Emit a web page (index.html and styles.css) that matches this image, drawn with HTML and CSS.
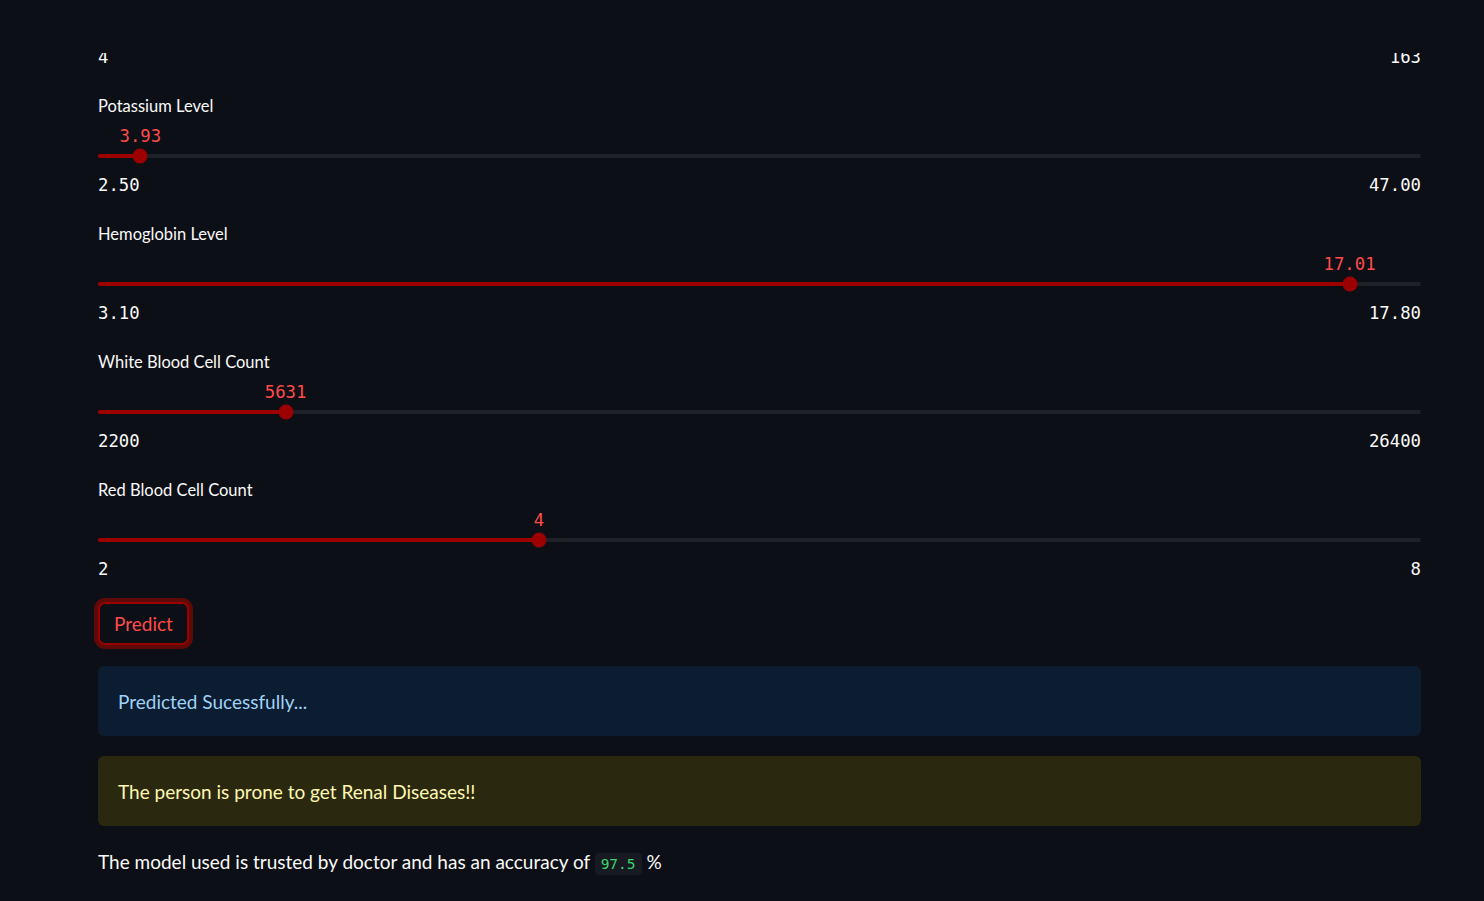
FILE: index.html
```html
<!DOCTYPE html>
<html lang="en">
<head>
  <meta charset="UTF-8" />
  <meta name="viewport" content="width=device-width, initial-scale=1.0" />
  <title>Renal Disease Prediction</title>
  <link rel="stylesheet" href="styles.css">
</head>
<body>
  <div class="topbar"></div>
  <div class="main">
    <div class="ticks first">
      <span>4</span>
      <span>163</span>
    </div>

    <div class="slider">
      <div class="label">Potassium Level</div>
      <div class="thumb-row" style="--p: 3.2%">
        <div class="value">3.93</div>
        <div class="track"><div class="fill"></div><div class="thumb"></div></div>
      </div>
      <div class="ticks"><span>2.50</span><span>47.00</span></div>
    </div>

    <div class="slider">
      <div class="label">Hemoglobin Level</div>
      <div class="thumb-row" style="--p: 94.6%">
        <div class="value">17.01</div>
        <div class="track"><div class="fill"></div><div class="thumb"></div></div>
      </div>
      <div class="ticks"><span>3.10</span><span>17.80</span></div>
    </div>

    <div class="slider">
      <div class="label">White Blood Cell Count</div>
      <div class="thumb-row" style="--p: 14.18%">
        <div class="value">5631</div>
        <div class="track"><div class="fill"></div><div class="thumb"></div></div>
      </div>
      <div class="ticks"><span>2200</span><span>26400</span></div>
    </div>

    <div class="slider">
      <div class="label">Red Blood Cell Count</div>
      <div class="thumb-row" style="--p: 33.33%">
        <div class="value">4</div>
        <div class="track"><div class="fill"></div><div class="thumb"></div></div>
      </div>
      <div class="ticks"><span>2</span><span>8</span></div>
    </div>

    <button class="predict-btn">Predict</button>

    <div class="alert info">Predicted Sucessfully...</div>
    <div class="alert warning">The person is prone to get Renal Diseases!!</div>

    <p class="note">The model used is trusted by doctor and has an accuracy of <code>97.5</code> %</p>
  </div>
</body>
</html>
```

FILE: styles.css
```css
body {
  margin: 0;
  background: #0c0f15;
  color: #fafafa;
  font-family: Lato, sans-serif;
  overflow: hidden;
}

.topbar {
  position: fixed;
  top: 0;
  left: 0;
  right: 0;
  height: 53px;
  background: #0c0f15;
  z-index: 2;
}

.main {
  width: 1323px;
  margin-left: 98px;
  padding-top: 45px;
  display: flex;
  flex-direction: column;
  align-items: flex-start;
}

.slider {
  width: 100%;
  height: 128px;
}

.label {
  height: 24px;
  line-height: 24px;
  font-size: 16.5px;
}

.thumb-row {
  position: relative;
  height: 40px;
  padding-top: 36px;
  box-sizing: border-box;
}

.value {
  position: absolute;
  top: 6px;
  left: var(--p);
  transform: translateX(-50%);
  height: 24px;
  line-height: 24px;
  font-family: "DejaVu Sans Mono", monospace;
  font-size: 17.3px;
  color: #ff4b4b;
  white-space: nowrap;
}

.track {
  position: relative;
  height: 4px;
  border-radius: 2px;
  background: #1f2128;
}

.fill {
  width: var(--p);
  height: 100%;
  border-radius: 2px;
  background: #9c0000;
}

.thumb {
  position: absolute;
  top: 50%;
  left: var(--p);
  width: 15px;
  height: 15px;
  border-radius: 50%;
  background: #9c0000;
  transform: translate(-50%, -50%);
}

.ticks {
  width: 100%;
  margin-top: 15px;
  height: 24px;
  line-height: 24px;
  display: flex;
  justify-content: space-between;
  font-family: "DejaVu Sans Mono", monospace;
  font-size: 17.3px;
}

.ticks.first {
  margin-top: 0;
  margin-bottom: 25px;
}

.predict-btn {
  margin-top: -4px;
  width: 91px;
  height: 43px;
  background: #0c0f15;
  color: #ff4b4b;
  border: 2px solid #990000;
  border-radius: 7px;
  box-shadow: 0 0 0 4px #600909;
  font-family: Lato, sans-serif;
  font-size: 19px;
}

.alert {
  box-sizing: border-box;
  width: 100%;
  height: 70px;
  padding: 0 20px;
  display: flex;
  align-items: center;
  border-radius: 6px;
  font-size: 19px;
}

.info {
  margin-top: 21px;
  background: #0c1c31;
  color: #9fd3f7;
}

.warning {
  margin-top: 20px;
  background: #2a2910;
  color: #fff7b0;
}

.note {
  margin: 22px 0 0;
  line-height: 28px;
  font-size: 19px;
}

.note code {
  font-family: "DejaVu Sans Mono", monospace;
  font-size: 14.5px;
  color: #3dd56d;
  background: #171a21;
  border-radius: 4px;
  padding: 3px 6px;
}
```
